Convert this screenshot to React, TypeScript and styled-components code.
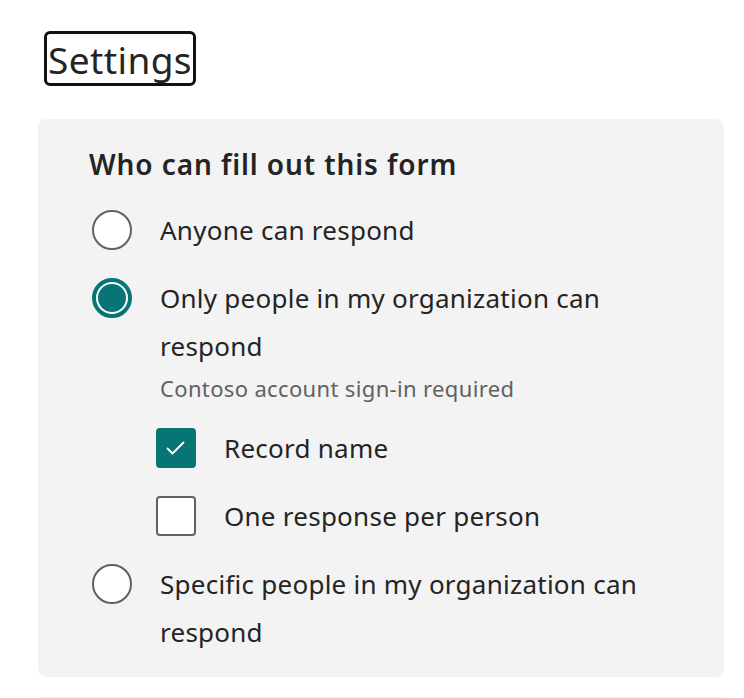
import React from "react";
import styled, { createGlobalStyle } from "styled-components";

const Global = createGlobalStyle`
  html, body { margin: 0; padding: 0; background: #ffffff; }
  body { font-family: "Noto Sans", "Open Sans", sans-serif; color: #242424; }
`;

const Page = styled.div`
  padding: 31px 20px 0 38px;
  display: flex;
  flex-direction: column;
  align-items: flex-start;
`;

const Heading = styled.h1`
  margin: 0 0 0 6px;
  box-sizing: border-box;
  height: 55px;
  padding: 2px 1px 0 1px;
  border: 3px solid #111111;
  border-radius: 6px;
  font-size: 37px;
  font-weight: 400;
  line-height: 47px;
  letter-spacing: 0.4px;
  color: #242424;
`;

const Card = styled.section`
  box-sizing: border-box;
  width: 686px;
  margin-top: 33px;
  padding: 27px 20px 21px 51px;
  background: #f3f3f3;
  border-radius: 8px;
  display: flex;
  flex-direction: column;
  gap: 20px;
`;

const NextCard = styled.div`
  width: 686px;
  height: 2px;
  margin-top: 20px;
  background: #f3f3f3;
  border-radius: 8px 8px 0 0;
`;

const Title = styled.h2`
  margin: 0 0 4px 0;
  font-size: 28px;
  font-weight: 600;
  line-height: 36px;
  letter-spacing: 0.9px;
  color: #242424;
`;

const Option = styled.div`
  display: flex;
  flex-direction: column;
`;

const Row = styled.label<{ $indent?: number }>`
  display: flex;
  align-items: flex-start;
  gap: 28px;
  margin-left: ${(p) => p.$indent ?? 3}px;
`;

const Radio = styled.span<{ $checked?: boolean }>`
  flex: none;
  box-sizing: border-box;
  width: 40px;
  height: 40px;
  margin-top: 4px;
  border-radius: 50%;
  border: ${(p) => (p.$checked ? "4px solid #077575" : "2px solid #616161")};
  background: #ffffff;
  display: flex;
  align-items: center;
  justify-content: center;
  &::after {
    content: "";
    display: ${(p) => (p.$checked ? "block" : "none")};
    width: 28px;
    height: 28px;
    border-radius: 50%;
    background: #077575;
  }
`;

const Check = styled.span<{ $checked?: boolean }>`
  flex: none;
  box-sizing: border-box;
  width: 40px;
  height: 40px;
  margin-top: 4px;
  border-radius: 4px;
  border: 2px solid ${(p) => (p.$checked ? "#077575" : "#616161")};
  background: ${(p) => (p.$checked ? "#077575" : "#ffffff")};
  display: flex;
  align-items: center;
  justify-content: center;
`;

const Label = styled.span`
  font-size: 26px;
  line-height: 48px;
  letter-spacing: 0.25px;
  color: #242424;
  max-width: 480px;
`;

const Sub = styled.div`
  margin: 4px 0 0 71px;
  font-size: 22px;
  line-height: 28px;
  letter-spacing: 0.35px;
  color: #616161;
`;

const SubOptions = styled.div`
  display: flex;
  flex-direction: column;
  gap: 20px;
  margin-top: 22px;
`;

const CheckMark = () => (
  <svg width="36" height="36" viewBox="0 0 36 36" fill="none">
    <path d="M9.5 18.5 L14.5 23.5 L25.5 12.5" stroke="#ffffff" strokeWidth="1.8" strokeLinecap="round" strokeLinejoin="round" />
  </svg>
);

export default function App() {
  return (
    <>
      <Global />
      <Page>
        <Heading>Settings</Heading>
        <Card>
          <Title>Who can fill out this form</Title>
          <Row>
            <Radio />
            <Label>Anyone can respond</Label>
          </Row>
          <Option>
            <Row>
              <Radio $checked />
              <Label>Only people in my organization can respond</Label>
            </Row>
            <Sub>Contoso account sign-in required</Sub>
            <SubOptions>
              <Row $indent={67}>
                <Check $checked>
                  <CheckMark />
                </Check>
                <Label>Record name</Label>
              </Row>
              <Row $indent={67}>
                <Check />
                <Label>One response per person</Label>
              </Row>
            </SubOptions>
          </Option>
          <Row>
            <Radio />
            <Label>Specific people in my organization can respond</Label>
          </Row>
        </Card>
        <NextCard />
      </Page>
    </>
  );
}
